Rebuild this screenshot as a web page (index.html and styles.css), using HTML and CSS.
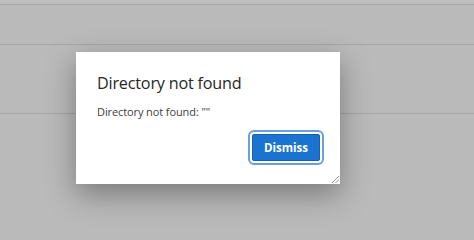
FILE: index.html
```html
<!DOCTYPE html>
<html>
<head>
<meta charset="utf-8">
<link rel="stylesheet" href="styles.css">
</head>
<body>
<div class="page">
  <div class="band band-top"></div>
  <div class="band band-1"></div>
  <div class="band band-2"></div>
  <div class="band band-rest"></div>
</div>
<div class="dialog">
  <h1 class="title">Directory not found</h1>
  <p class="message">Directory not found: ""</p>
  <div class="actions">
    <button class="btn">Dismiss</button>
  </div>
  <svg class="grip" width="8" height="8" viewBox="0 0 8 8">
    <path d="M1 8 L8 1 M4.5 8 L8 4.5" stroke="#8a8a8a" stroke-width="0.9" fill="none"/>
  </svg>
</div>
</body>
</html>
```

FILE: styles.css
```css
html, body {
  margin: 0;
  padding: 0;
  width: 474px;
  height: 220px;
  overflow: hidden;
  background: #bababa;
}
.page {
  display: flex;
  flex-direction: column;
  height: 220px;
}
.band {
  background: #bababa;
  border-bottom: 1px solid #a6a6a6;
}
.band-top { height: 4px; background: #bebebe; }
.band-1 { height: 39px; }
.band-2 { height: 68px; }
.band-rest { flex: 1; border-bottom: none; }
.dialog {
  position: absolute;
  left: 76px;
  top: 52px;
  width: 264px;
  height: 132px;
  box-sizing: border-box;
  background: #ffffff;
  padding: 20px 20px 0 21px;
  box-shadow: 0 10px 28px rgba(0,0,0,0.35);
  font-family: "Open Sans", "Noto Sans", sans-serif;
}
.title {
  margin: 0;
  font-size: 16.2px;
  letter-spacing: -0.2px;
  font-weight: 400;
  color: #262626;
  line-height: 22px;
}
.message {
  margin: 10px 0 0 0;
  font-size: 11px;
  letter-spacing: -0.1px;
  color: #404040;
  line-height: 16px;
}
.actions {
  display: flex;
  justify-content: flex-end;
  margin-top: 14px;
}
.btn {
  font-family: "Open Sans", "Noto Sans", sans-serif;
  font-weight: 700;
  font-size: 11.5px;
  color: #ffffff;
  background: #1a73d1;
  border: 1px solid #155fb0;
  border-radius: 2px;
  width: 68px;
  height: 27px;
  padding: 0;
  outline: 2px solid #6a9fd8;
  outline-offset: 2px;
  box-shadow: 0 0 0 2px #ffffff;
}
.grip {
  position: absolute;
  right: 1px;
  bottom: 1px;
}
```
